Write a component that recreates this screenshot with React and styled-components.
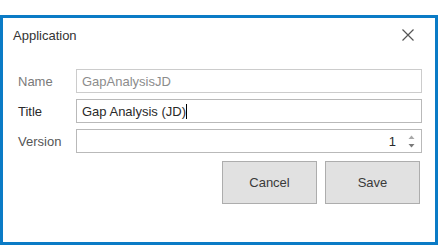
import React from 'react'
import styled, { createGlobalStyle } from 'styled-components'

const GlobalStyle = createGlobalStyle`
  html, body {
    margin: 0;
    padding: 0;
    background: #fff;
  }
  body {
    font-family: 'Liberation Sans', Arial, sans-serif;
    font-size: 13px;
  }
`

const Page = styled.div`
  padding-top: 15px;
`

const Dialog = styled.div`
  box-sizing: border-box;
  width: 438px;
  height: 230px;
  border: 3px solid #0b7bc6;
  background: #fff;
  display: flex;
  flex-direction: column;
`

const Header = styled.div`
  height: 34px;
  display: flex;
  align-items: center;
  justify-content: space-between;
  padding: 0 21px 0 10px;
`

const Caption = styled.div`
  color: #333;
  font-size: 13px;
`

const CloseButton = styled.div`
  width: 12px;
  height: 12px;
  display: flex;

  svg {
    display: block;
  }
`

const Form = styled.div`
  padding: 17px 13px 0 15px;
  display: flex;
  flex-direction: column;
`

const Fields = styled.div`
  display: grid;
  grid-template-columns: 58px 1fr;
  grid-auto-rows: 24px;
  row-gap: 6px;
`

const Label = styled.div`
  display: flex;
  align-items: center;
  color: ${p => p.$color || '#333'};
`

const Field = styled.div`
  box-sizing: border-box;
  border: 1px solid ${p => (p.$disabled ? '#cccccc' : '#b9b9b9')};
  display: flex;
  align-items: center;
  justify-content: ${p => (p.$right ? 'flex-end' : 'flex-start')};
  padding: ${p => (p.$right ? '0 6px 0 5px' : '0 5px')};
  color: ${p => (p.$disabled ? '#8c8c8c' : '#2a2a2a')};
  white-space: nowrap;
`

const Caret = styled.span`
  display: inline-block;
  width: 1px;
  height: 15px;
  background: #000;
`

const Spinner = styled.div`
  display: flex;
  flex-direction: column;
  justify-content: space-between;
  height: 13px;
  margin-left: 12px;

  svg {
    display: block;
  }
`

const Buttons = styled.div`
  display: flex;
  justify-content: flex-end;
  gap: 8px;
  margin: 8px 2px 0 0;
`

const Button = styled.div`
  box-sizing: border-box;
  width: 95px;
  height: 43px;
  background: #e1e1e1;
  border: 1px solid #adadad;
  display: flex;
  align-items: center;
  justify-content: center;
  color: #3a3a3a;
`

const App = () => {
  return (
    <>
      <GlobalStyle />
      <Page>
        <Dialog>
          <Header>
            <Caption>Application</Caption>
            <CloseButton>
              <svg width='12' height='12' viewBox='0 0 12 12'>
                <path d='M0.5 0.5L11.5 11.5M11.5 0.5L0.5 11.5' stroke='#555' strokeWidth='1.2' fill='none' />
              </svg>
            </CloseButton>
          </Header>
          <Form>
            <Fields>
              <Label $color='#7a7a7a'>Name</Label>
              <Field $disabled>GapAnalysisJD</Field>
              <Label $color='#2a2a2a'>Title</Label>
              <Field>Gap Analysis (JD)<Caret /></Field>
              <Label $color='#555'>Version</Label>
              <Field $right>
                1
                <Spinner>
                  <svg width='7' height='4' viewBox='0 0 7 4'>
                    <path d='M0.5 4L3.5 0.5L6.5 4Z' fill='#a8a8a8' />
                  </svg>
                  <svg width='7' height='4' viewBox='0 0 7 4'>
                    <path d='M0.5 0L3.5 3.5L6.5 0Z' fill='#7a7a7a' />
                  </svg>
                </Spinner>
              </Field>
            </Fields>
            <Buttons>
              <Button>Cancel</Button>
              <Button>Save</Button>
            </Buttons>
          </Form>
        </Dialog>
      </Page>
    </>
  )
}

export default App
